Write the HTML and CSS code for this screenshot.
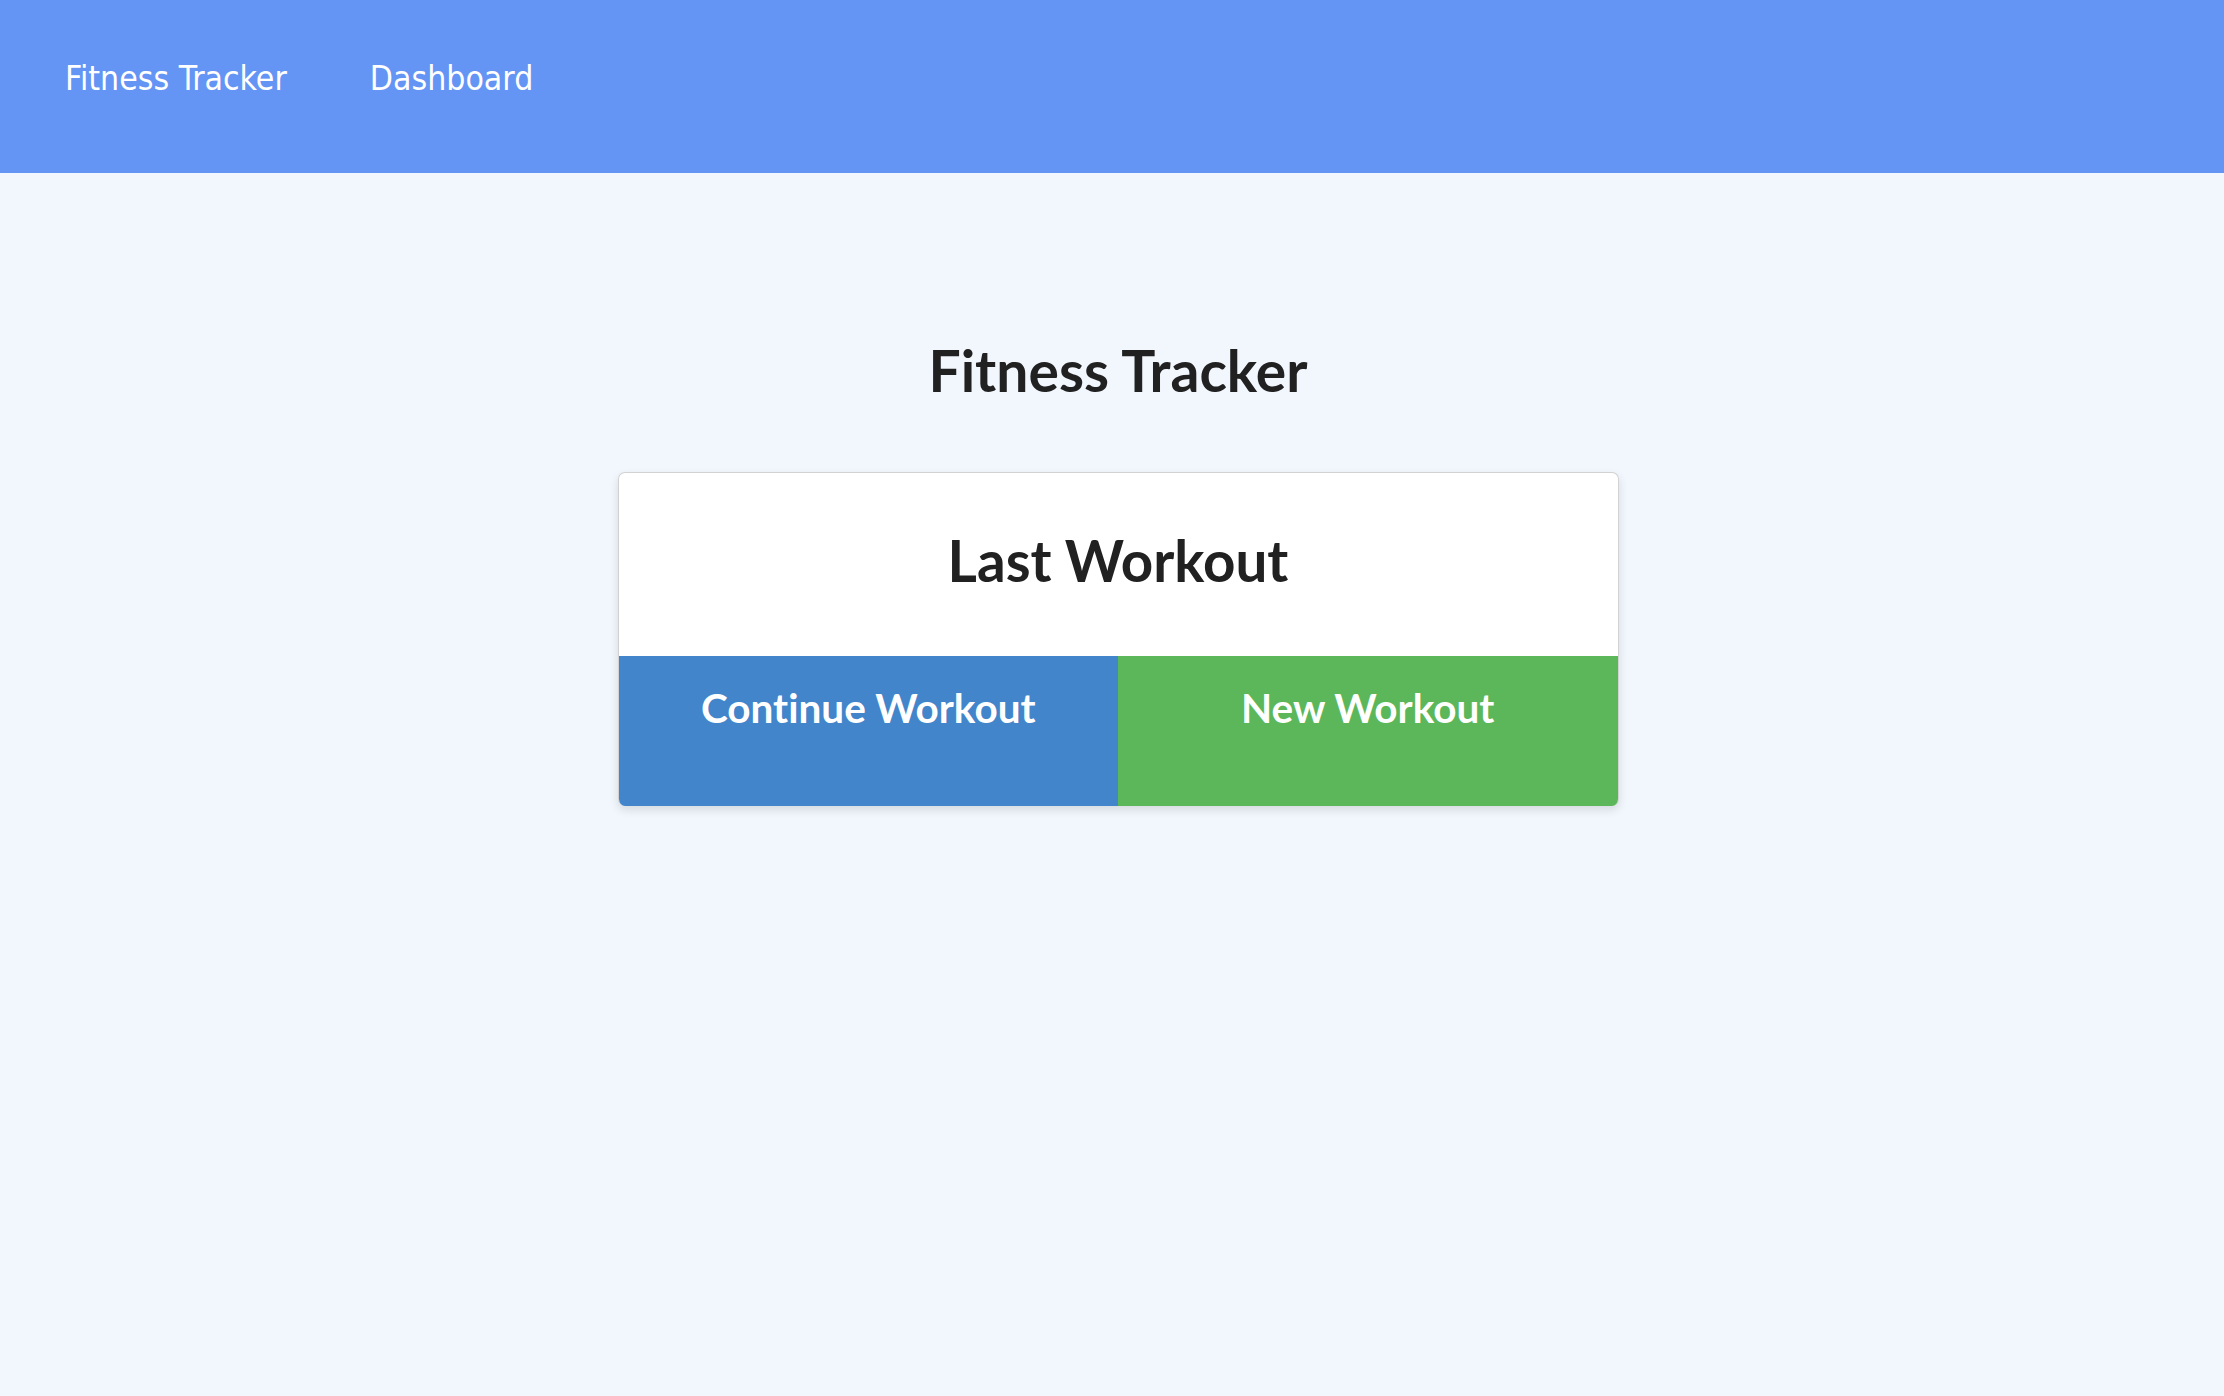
FILE: index.html
```
<!DOCTYPE html>
<html lang="en">
<head>
<meta charset="utf-8">
<title>Fitness Tracker</title>
<link rel="stylesheet" href="styles.css">
</head>
<body>
<nav class="topnav">
  <a class="nav-link" href="#">Fitness Tracker</a>
  <a class="nav-link" href="#">Dashboard</a>
</nav>
<main class="main">
  <h1 class="page-title">Fitness Tracker</h1>
  <section class="card">
    <div class="card-head">
      <h2 class="card-title">Last Workout</h2>
    </div>
    <div class="card-actions">
      <a class="action action-continue" href="#">Continue Workout</a>
      <a class="action action-new" href="#">New Workout</a>
    </div>
  </section>
</main>
</body>
</html>
```
FILE: styles.css
```
html, body {
  margin: 0;
  padding: 0;
}
body {
  background: #f2f7fe;
  font-family: Lato, "Liberation Sans", sans-serif;
  font-variant-ligatures: no-common-ligatures;
  color: #212121;
  min-height: 1396px;
}
.topnav {
  box-sizing: border-box;
  height: 173px;
  background: #6494f4;
  display: flex;
  align-items: flex-start;
  padding: 59px 0 0 65px;
  gap: 83px;
}
.nav-link {
  font-family: "DejaVu Sans Condensed", "DejaVu Sans", sans-serif;
  font-stretch: condensed;
  font-size: 33.5px;
  line-height: 40px;
  color: #ffffff;
  text-decoration: none;
}
.main {
  display: flex;
  flex-direction: column;
  align-items: center;
  padding-left: 12px;
}
.page-title {
  margin: 164px 0 0;
  font-size: 57px;
  line-height: 67px;
  font-weight: 700;
  color: #212121;
}
.card {
  margin-top: 68px;
  width: 1001px;
  box-sizing: border-box;
  background: #ffffff;
  border: 1px solid #d2d2d2;
  border-bottom: none;
  border-radius: 7px;
  overflow: hidden;
  box-shadow: 0 4px 10px rgba(0, 0, 0, 0.12);
}
.card-head {
  padding: 54px 0 62px;
  text-align: center;
}
.card-title {
  margin: 0;
  font-size: 56.5px;
  line-height: 67px;
  font-weight: 700;
  color: #212121;
}
.card-actions {
  display: grid;
  grid-template-columns: 1fr 1fr;
}
.action {
  box-sizing: border-box;
  height: 150px;
  padding-top: 28px;
  text-align: center;
  font-size: 40.5px;
  line-height: 48px;
  font-weight: 700;
  color: #ffffff;
  text-decoration: none;
}
.action-continue {
  background: #4285ca;
}
.action-new {
  background: #5bb75a;
}
```
